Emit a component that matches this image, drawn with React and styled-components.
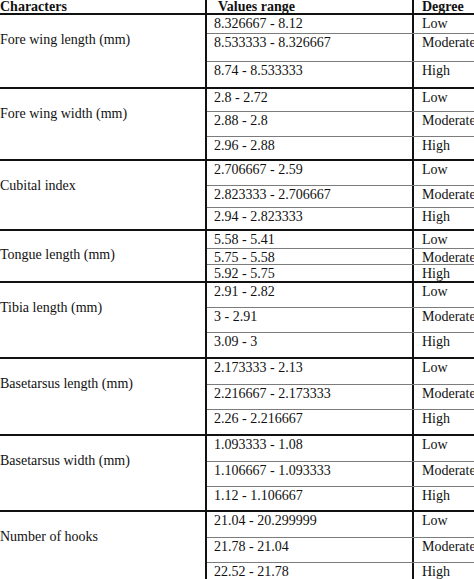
import React from 'react';
import styled, { createGlobalStyle } from 'styled-components';

const GlobalStyle = createGlobalStyle`
  html, body {
    margin: 0;
    padding: 0;
    background: #ffffff;
    overflow: hidden;
  }
  body {
    font-family: "Liberation Serif", "Times New Roman", serif;
    color: #111111;
  }
`;

const Table = styled.div`
  width: 474px;
  display: flex;
  flex-direction: column;
  font-size: 14px;
  line-height: 13px;
`;

const HeaderRow = styled.div`
  display: grid;
  grid-template-columns: 207px 207px 1fr;
  height: 15px;
  box-sizing: border-box;
  border-bottom: 2px solid #111;
  font-weight: bold;
`;

const HeadCell = styled.div`
  padding-left: ${({ $pad }) => $pad}px;
  border-right: ${({ $line }) => ($line ? '2px solid #111' : 'none')};
  white-space: nowrap;
`;

const Group = styled.div`
  display: grid;
  grid-template-columns: 207px 1fr;
  border-bottom: 2px solid #111;
`;

const Label = styled.div`
  box-sizing: border-box;
  border-right: 2px solid #111;
  padding-top: ${({ $top }) => $top}px;
  white-space: nowrap;
`;

const Rows = styled.div`
  display: flex;
  flex-direction: column;
`;

const Row = styled.div`
  display: grid;
  grid-template-columns: 207px 1fr;
  box-sizing: border-box;
  height: ${({ $h }) => $h}px;
  border-bottom: ${({ $last }) => ($last ? 'none' : '1px solid #7c7c7c')};
`;

const Value = styled.div`
  box-sizing: border-box;
  border-right: 2px solid #111;
  padding: 2px 0 0 7px;
  white-space: nowrap;
`;

const Degree = styled.div`
  padding: 2px 0 0 8px;
  white-space: nowrap;
  overflow: hidden;
`;

const data = [
  {
    name: 'Fore wing length (mm)',
    top: 18,
    rows: [
      ['8.326667 - 8.12', 'Low', 19],
      ['8.533333 - 8.326667', 'Moderate', 28],
      ['8.74 - 8.533333', 'High', 25],
    ],
  },
  {
    name: 'Fore wing width (mm)',
    top: 18,
    rows: [
      ['2.8 - 2.72', 'Low', 23],
      ['2.88 - 2.8', 'Moderate', 25],
      ['2.96 - 2.88', 'High', 22],
    ],
  },
  {
    name: 'Cubital index',
    top: 18,
    rows: [
      ['2.706667 - 2.59', 'Low', 25],
      ['2.823333 - 2.706667', 'Moderate', 22],
      ['2.94 - 2.823333', 'High', 21],
    ],
  },
  {
    name: 'Tongue length (mm)',
    top: 17,
    rows: [
      ['5.58 - 5.41', 'Low', 18],
      ['5.75 - 5.58', 'Moderate', 16],
      ['5.92 - 5.75', 'High', 16],
    ],
  },
  {
    name: 'Tibia length (mm)',
    top: 18,
    rows: [
      ['2.91 - 2.82', 'Low', 25],
      ['3 - 2.91', 'Moderate', 25],
      ['3.09 - 3', 'High', 24],
    ],
  },
  {
    name: 'Basetarsus length (mm)',
    top: 18,
    rows: [
      ['2.173333 - 2.13', 'Low', 26],
      ['2.216667 - 2.173333', 'Moderate', 25],
      ['2.26 - 2.216667', 'High', 24],
    ],
  },
  {
    name: 'Basetarsus width (mm)',
    top: 18,
    rows: [
      ['1.093333 - 1.08', 'Low', 26],
      ['1.106667 - 1.093333', 'Moderate', 25],
      ['1.12 - 1.106667', 'High', 23],
    ],
  },
  {
    name: 'Number of hooks',
    top: 18,
    rows: [
      ['21.04 - 20.299999', 'Low', 26],
      ['21.78 - 21.04', 'Moderate', 25],
      ['22.52 - 21.78', 'High', 24],
    ],
  },
];

export default function App() {
  return (
    <>
      <GlobalStyle />
      <Table>
        <HeaderRow>
          <HeadCell $pad={0} $line>Characters</HeadCell>
          <HeadCell $pad={11} $line>Values range</HeadCell>
          <HeadCell $pad={8}>Degree</HeadCell>
        </HeaderRow>
        {data.map((g) => (
          <Group key={g.name}>
            <Label $top={g.top}>{g.name}</Label>
            <Rows>
              {g.rows.map(([v, d, h], i) => (
                <Row key={v} $h={h} $last={i === g.rows.length - 1}>
                  <Value>{v}</Value>
                  <Degree>{d}</Degree>
                </Row>
              ))}
            </Rows>
          </Group>
        ))}
      </Table>
    </>
  );
}
